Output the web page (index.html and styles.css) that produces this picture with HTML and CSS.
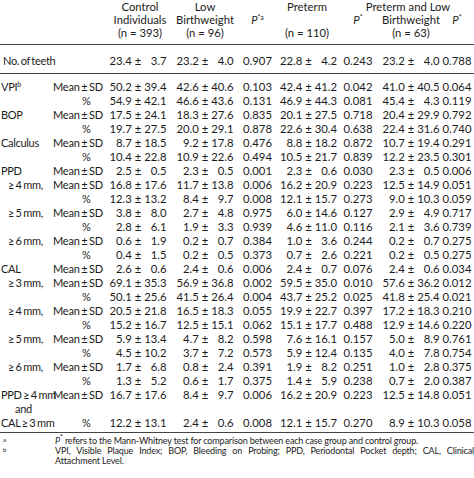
FILE: index.html
```html
<!DOCTYPE html>
<html>
<head>
<meta charset="utf-8">
<link rel="stylesheet" href="styles.css">
</head>
<body>
<div class="page">
  <div class="grid head">
    <span class="h c3 r1">Control</span>
    <span class="h c3 r2">Individuals</span>
    <span class="h c3 r3">(n = 393)</span>
    <span class="h c4 r1">Low</span>
    <span class="h c4 r2">Birthweight</span>
    <span class="h c4 r3">(n = 96)</span>
    <span class="h c5 r2"><i>P</i><sup>*a</sup></span>
    <span class="h c6 r1">Preterm</span>
    <span class="h c6 r3">(n = 110)</span>
    <span class="h c7 r2"><i>P</i><sup>*</sup></span>
    <span class="h c79 r1">Preterm and Low</span>
    <span class="h c8 r2">Birthweight</span>
    <span class="h c8 r3">(n = 63)</span>
    <span class="h c9 r2"><i>P</i><sup>*</sup></span>
  </div>

  <div class="teeth">
    <div class="row">
      <span class="lab span2">No. of teeth</span>
      <span class="v ctl">23.4 ± &#8199;3.7</span><span class="v">23.2 ± &#8199;4.0</span><span class="v">0.907</span><span class="v">22.8 ± &#8199;4.2</span><span class="v">0.243</span><span class="v">23.2 ± &#8199;4.0</span><span class="v">0.788</span>
    </div>
  </div>

  <div class="body">
    <div class="row"><span class="lab">VPI<sup>b</sup></span><span class="sub">Mean ± SD</span><span class="v ctl">50.2 ± 39.4</span><span class="v">42.6 ± 40.6</span><span class="v">0.103</span><span class="v">42.4 ± 41.2</span><span class="v">0.042</span><span class="v">41.0 ± 40.5</span><span class="v">0.064</span></div>
    <div class="row"><span class="lab"></span><span class="sub pct">%</span><span class="v ctl">54.9 ± 42.1</span><span class="v">46.6 ± 43.6</span><span class="v">0.131</span><span class="v">46.9 ± 44.3</span><span class="v">0.081</span><span class="v">45.4 ± &#8199;4.3</span><span class="v">0.119</span></div>
    <div class="row"><span class="lab">BOP</span><span class="sub">Mean ± SD</span><span class="v ctl">17.5 ± 24.1</span><span class="v">18.3 ± 27.6</span><span class="v">0.835</span><span class="v">20.1 ± 27.5</span><span class="v">0.718</span><span class="v">20.4 ± 29.9</span><span class="v">0.792</span></div>
    <div class="row"><span class="lab"></span><span class="sub pct">%</span><span class="v ctl">19.7 ± 27.5</span><span class="v">20.0 ± 29.1</span><span class="v">0.878</span><span class="v">22.6 ± 30.4</span><span class="v">0.638</span><span class="v">22.4 ± 31.6</span><span class="v">0.740</span></div>
    <div class="row"><span class="lab">Calculus</span><span class="sub">Mean ± SD</span><span class="v ctl">&#8199;8.7 ± 18.5</span><span class="v">&#8199;9.2 ± 17.8</span><span class="v">0.476</span><span class="v">&#8199;8.8 ± 18.2</span><span class="v">0.872</span><span class="v">10.7 ± 19.4</span><span class="v">0.291</span></div>
    <div class="row"><span class="lab"></span><span class="sub pct">%</span><span class="v ctl">10.4 ± 22.8</span><span class="v">10.9 ± 22.6</span><span class="v">0.494</span><span class="v">10.5 ± 21.7</span><span class="v">0.839</span><span class="v">12.2 ± 23.5</span><span class="v">0.301</span></div>
    <div class="row"><span class="lab">PPD</span><span class="sub">Mean ± SD</span><span class="v ctl">&#8199;2.5 ± &#8199;0.5</span><span class="v">&#8199;2.3 ± &#8199;0.5</span><span class="v">0.001</span><span class="v">&#8199;2.3 ± &#8199;0.6</span><span class="v">0.030</span><span class="v">&#8199;2.3 ± &#8199;0.5</span><span class="v">0.006</span></div>
    <div class="row"><span class="lab ind">≥ 4 mm,</span><span class="sub">Mean ± SD</span><span class="v ctl">16.8 ± 17.6</span><span class="v">11.7 ± 13.8</span><span class="v">0.006</span><span class="v">16.2 ± 20.9</span><span class="v">0.223</span><span class="v">12.5 ± 14.9</span><span class="v">0.051</span></div>
    <div class="row"><span class="lab"></span><span class="sub pct">%</span><span class="v ctl">12.3 ± 13.2</span><span class="v">&#8199;8.4 ± &#8199;9.7</span><span class="v">0.008</span><span class="v">12.1 ± 15.7</span><span class="v">0.273</span><span class="v">&#8199;9.0 ± 10.3</span><span class="v">0.059</span></div>
    <div class="row"><span class="lab ind">≥ 5 mm,</span><span class="sub">Mean ± SD</span><span class="v ctl">&#8199;3.8 ± &#8199;8.0</span><span class="v">&#8199;2.7 ± &#8199;4.8</span><span class="v">0.975</span><span class="v">&#8199;6.0 ± 14.6</span><span class="v">0.127</span><span class="v">&#8199;2.9 ± &#8199;4.9</span><span class="v">0.717</span></div>
    <div class="row"><span class="lab"></span><span class="sub pct">%</span><span class="v ctl">&#8199;2.8 ± &#8199;6.1</span><span class="v">&#8199;1.9 ± &#8199;3.3</span><span class="v">0.939</span><span class="v">&#8199;4.6 ± 11.0</span><span class="v">0.116</span><span class="v">&#8199;2.1 ± &#8199;3.6</span><span class="v">0.739</span></div>
    <div class="row"><span class="lab ind">≥ 6 mm,</span><span class="sub">Mean ± SD</span><span class="v ctl">&#8199;0.6 ± &#8199;1.9</span><span class="v">&#8199;0.2 ± &#8199;0.7</span><span class="v">0.384</span><span class="v">&#8199;1.0 ± &#8199;3.6</span><span class="v">0.244</span><span class="v">&#8199;0.2 ± &#8199;0.7</span><span class="v">0.275</span></div>
    <div class="row"><span class="lab"></span><span class="sub pct">%</span><span class="v ctl">&#8199;0.4 ± &#8199;1.5</span><span class="v">&#8199;0.2 ± &#8199;0.5</span><span class="v">0.373</span><span class="v">&#8199;0.7 ± &#8199;2.6</span><span class="v">0.221</span><span class="v">&#8199;0.2 ± &#8199;0.5</span><span class="v">0.275</span></div>
    <div class="row"><span class="lab">CAL</span><span class="sub">Mean ± SD</span><span class="v ctl">&#8199;2.6 ± &#8199;0.6</span><span class="v">&#8199;2.4 ± &#8199;0.6</span><span class="v">0.006</span><span class="v">&#8199;2.4 ± &#8199;0.7</span><span class="v">0.076</span><span class="v">&#8199;2.4 ± &#8199;0.6</span><span class="v">0.034</span></div>
    <div class="row"><span class="lab ind">≥ 3 mm,</span><span class="sub">Mean ± SD</span><span class="v ctl">69.1 ± 35.3</span><span class="v">56.9 ± 36.8</span><span class="v">0.002</span><span class="v">59.5 ± 35.0</span><span class="v">0.010</span><span class="v">57.6 ± 36.2</span><span class="v">0.012</span></div>
    <div class="row"><span class="lab"></span><span class="sub pct">%</span><span class="v ctl">50.1 ± 25.6</span><span class="v">41.5 ± 26.4</span><span class="v">0.004</span><span class="v">43.7 ± 25.2</span><span class="v">0.025</span><span class="v">41.8 ± 25.4</span><span class="v">0.021</span></div>
    <div class="row"><span class="lab ind">≥ 4 mm,</span><span class="sub">Mean ± SD</span><span class="v ctl">20.5 ± 21.8</span><span class="v">16.5 ± 18.3</span><span class="v">0.055</span><span class="v">19.9 ± 22.7</span><span class="v">0.397</span><span class="v">17.2 ± 18.3</span><span class="v">0.210</span></div>
    <div class="row"><span class="lab"></span><span class="sub pct">%</span><span class="v ctl">15.2 ± 16.7</span><span class="v">12.5 ± 15.1</span><span class="v">0.062</span><span class="v">15.1 ± 17.7</span><span class="v">0.488</span><span class="v">12.9 ± 14.6</span><span class="v">0.220</span></div>
    <div class="row"><span class="lab ind">≥ 5 mm,</span><span class="sub">Mean ± SD</span><span class="v ctl">&#8199;5.9 ± 13.4</span><span class="v">&#8199;4.7 ± &#8199;8.2</span><span class="v">0.598</span><span class="v">&#8199;7.6 ± 16.1</span><span class="v">0.157</span><span class="v">&#8199;5.0 ± &#8199;8.9</span><span class="v">0.761</span></div>
    <div class="row"><span class="lab"></span><span class="sub pct">%</span><span class="v ctl">&#8199;4.5 ± 10.2</span><span class="v">&#8199;3.7 ± &#8199;7.2</span><span class="v">0.573</span><span class="v">&#8199;5.9 ± 12.4</span><span class="v">0.135</span><span class="v">&#8199;4.0 ± &#8199;7.8</span><span class="v">0.754</span></div>
    <div class="row"><span class="lab ind">≥ 6 mm,</span><span class="sub">Mean ± SD</span><span class="v ctl">&#8199;1.7 ± &#8199;6.8</span><span class="v">&#8199;0.8 ± &#8199;2.4</span><span class="v">0.391</span><span class="v">&#8199;1.9 ± &#8199;8.2</span><span class="v">0.251</span><span class="v">&#8199;1.0 ± &#8199;2.8</span><span class="v">0.375</span></div>
    <div class="row"><span class="lab"></span><span class="sub pct">%</span><span class="v ctl">&#8199;1.3 ± &#8199;5.2</span><span class="v">&#8199;0.6 ± &#8199;1.7</span><span class="v">0.375</span><span class="v">&#8199;1.4 ± &#8199;5.9</span><span class="v">0.238</span><span class="v">&#8199;0.7 ± &#8199;2.0</span><span class="v">0.387</span></div>
    <div class="row"><span class="lab">PPD ≥ 4 mm</span><span class="sub">Mean ± SD</span><span class="v ctl">16.7 ± 17.6</span><span class="v">&#8199;8.4 ± &#8199;9.7</span><span class="v">0.006</span><span class="v">16.2 ± 20.9</span><span class="v">0.223</span><span class="v">12.5 ± 14.8</span><span class="v">0.051</span></div>
    <div class="row"><span class="lab and">and</span></div>
    <div class="row"><span class="lab">CAL ≥ 3 mm</span><span class="sub pct">%</span><span class="v ctl">12.2 ± 13.1</span><span class="v">&#8199;2.4 ± &#8199;0.6</span><span class="v">0.008</span><span class="v">12.1 ± 15.7</span><span class="v">0.270</span><span class="v">&#8199;8.9 ± 10.3</span><span class="v">0.058</span></div>
  </div>

  <div class="notes">
    <div class="note">
      <span class="mark">a</span>
      <p><span class="line"><i>P</i><sup>*</sup> refers to the Mann-Whitney test for comparison between each case group and control group.</span></p>
    </div>
    <div class="note">
      <span class="mark">b</span>
      <p><span class="line just">VPI, Visible Plaque Index; BOP, Bleeding on Probing; PPD, Periodontal Pocket depth; CAL, Clinical</span><span class="line">Attachment Level.</span></p>
    </div>
  </div>
</div>
</body>
</html>
```

FILE: styles.css
```css
html, body {
  margin: 0;
  padding: 0;
  background: #ffffff;
}

.page {
  width: 474px;
  font-family: Lato, "Liberation Sans", sans-serif;
  font-size: 11.3px;
  color: #1c1c1c;
  font-variant-numeric: tabular-nums;
}

.grid,
.row {
  display: grid;
  grid-template-columns: 52px 53px 70px 60px 45px 54px 48px 58px 34px;
}

.head {
  grid-template-rows: 13px 13px 13px;
  line-height: 13px;
  padding-bottom: 5px;
  border-bottom: 1px solid #444444;
}

.h {
  text-align: center;
  white-space: nowrap;
}

.c3 { grid-column: 3; }
.c4 { grid-column: 4; }
.c5 { grid-column: 5; }
.c6 { grid-column: 6; }
.c7 { grid-column: 7; }
.c8 { grid-column: 8; }
.c9 { grid-column: 9; }
.c79 { grid-column: 7 / 10; padding-left: 8px; }
.r1 { grid-row: 1; }
.r2 { grid-row: 2; }
.r3 { grid-row: 3; }

sup {
  font-size: 7px;
  line-height: 0;
  vertical-align: 4px;
}

.teeth {
  padding-top: 9px;
  padding-bottom: 5px;
  border-bottom: 1px solid #444444;
}

.body {
  padding-top: 6px;
  border-bottom: 1px solid #444444;
  padding-bottom: 2px;
}

.row {
  height: 14px;
  line-height: 14px;
  white-space: pre;
}

.lab {
  grid-column: 1;
  padding-left: 1px;
  white-space: nowrap;
  font-size: 11px;
  letter-spacing: -0.3px;
  word-spacing: -1px;
}

.span2 {
  grid-column: 1 / 3;
  padding-left: 3px;
}

.ind {
  padding-left: 8px;
}

.and {
  padding-left: 15px;
}

.sub {
  grid-column: 2;
  padding-left: 1px;
  white-space: nowrap;
  font-size: 11px;
  letter-spacing: -0.2px;
  word-spacing: -1px;
}

.pct {
  padding-left: 30px;
}

.v {
  text-align: center;
  white-space: pre;
}

.ctl {
  padding-left: 2px;
  padding-right: 6px;
}

.notes {
  padding-top: 3px;
  font-size: 9px;
  line-height: 10px;
  letter-spacing: -0.15px;
}

.note {
  display: grid;
  grid-template-columns: 55px 1fr;
}

.mark {
  font-size: 6px;
  line-height: 8px;
  padding-left: 3px;
}

.note p {
  margin: 0;
}

.line {
  display: block;
  white-space: nowrap;
}

.line.just {
  text-align: justify;
  text-align-last: justify;
  white-space: normal;
}
```
